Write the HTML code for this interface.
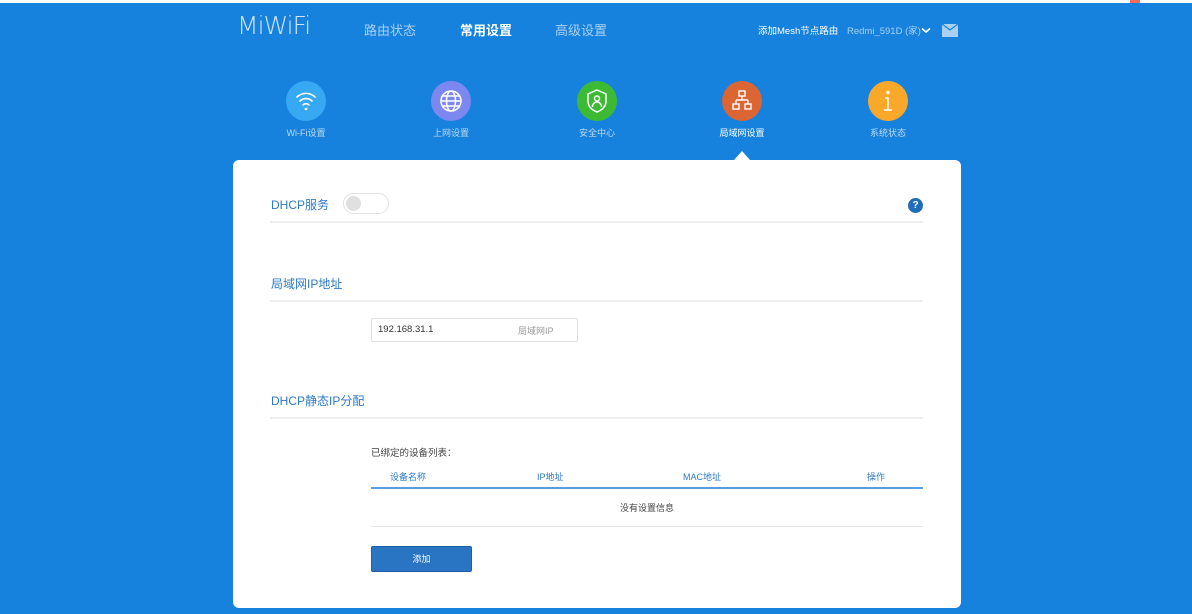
<!DOCTYPE html>
<html><head><meta charset="utf-8"><style>
*{margin:0;padding:0;box-sizing:border-box}
body{width:1192px;height:614px;background:#1782dd;font-family:"Liberation Sans","Noto Sans CJK SC",sans-serif;position:relative;overflow:hidden}
.a{position:absolute}
.top{left:0;top:0;width:1192px;height:3px;background:#fff}
.logo{left:237px;top:11px;color:#cfe4f8;font-size:25px;font-family:"DejaVu Sans","Liberation Sans",sans-serif;font-weight:200;letter-spacing:-1px}
.nav{top:20px;font-size:13px;color:#a9d0f2}
.ic{width:40px;height:40px;border-radius:50%;top:81px}
.lbl{top:126px;font-size:9px;color:#bcd9f3;width:100px;text-align:center}
.card{left:233px;top:160px;width:728px;height:448px;background:#fff;border-radius:6px}
.h{font-size:12px;color:#2d79c7}
.line{height:2px;background:#eeeeee;left:270px;width:653px}
</style></head><body>
<div class="a top"></div>
<div class="a" style="left:1130px;top:0;width:10px;height:3px;background:#f06b5e"></div>
<div class="a logo">MiWiFi</div>
<div class="a nav" style="left:364px">路由状态</div>
<div class="a nav" style="left:460px;color:#fff;font-weight:bold">常用设置</div>
<div class="a nav" style="left:555px">高级设置</div>
<div class="a" style="left:758px;top:23px;font-size:9.5px;color:#fff">添加Mesh节点路由</div>
<div class="a" style="left:847px;top:23px;font-size:9.5px;color:#a9d0f2">Redmi_591D (家)</div>
<svg class="a" style="left:921px;top:27px" width="10" height="7" viewBox="0 0 10 7"><path d="M1 1.5L5 5L9 1.5" stroke="#fff" stroke-width="1.6" fill="none"/></svg>
<svg class="a" style="left:942px;top:24px" width="16" height="13" viewBox="0 0 16 13"><rect width="16" height="13" fill="#a9d0f2"/><path d="M0 0L8 6L16 0" stroke="#1782dd" stroke-width="1.2" fill="none"/></svg>

<div class="a ic" style="left:286px;background:#36a9f2"></div>
<svg class="a" style="left:286px;top:81px" width="40" height="40" viewBox="0 0 40 40" fill="none" stroke="#fff" stroke-width="1.6" stroke-linecap="round"><path d="M11 16a13 13 0 0 1 18 0"/><path d="M14 20a8.5 8.5 0 0 1 12 0"/><path d="M17 24a4 4 0 0 1 6 0"/><circle cx="20" cy="28" r="0.6" fill="#fff"/></svg>
<div class="a ic" style="left:431px;background:#7c88f0"></div>
<svg class="a" style="left:431px;top:81px" width="40" height="40" viewBox="0 0 40 40" fill="none" stroke="#fff" stroke-width="1.5"><circle cx="20" cy="20" r="10"/><ellipse cx="20" cy="20" rx="4.5" ry="10"/><path d="M10 20h20M12 15h16M12 25h16"/></svg>
<div class="a ic" style="left:577px;background:#3dba34"></div>
<svg class="a" style="left:577px;top:81px" width="40" height="40" viewBox="0 0 40 40" fill="none" stroke="#fff" stroke-width="1.5"><path d="M20 9l9 4v7c0 6-4 9-9 11c-5-2-9-5-9-11v-7z"/><circle cx="20" cy="17.5" r="2.5"/><path d="M15.5 26c0-3 2-5 4.5-5s4.5 2 4.5 5"/></svg>
<div class="a ic" style="left:722px;background:#dc6534"></div>
<svg class="a" style="left:722px;top:81px" width="40" height="40" viewBox="0 0 40 40" fill="none" stroke="#fff" stroke-width="1.4"><rect x="17" y="10" width="6" height="5"/><path d="M20 15v4M14 19h12M14 19v4M26 19v4"/><rect x="11" y="23" width="6" height="5"/><rect x="23" y="23" width="6" height="5"/></svg>
<div class="a ic" style="left:868px;background:#f9a82a"></div>
<svg class="a" style="left:868px;top:81px" width="40" height="40" viewBox="0 0 40 40" fill="none" stroke="#fff" stroke-width="1.4"><circle cx="20" cy="11.5" r="1" fill="#fff"/><path d="M17 17h3v12M16 29h8"/></svg>
<div class="a lbl" style="left:256px">Wi-Fi设置</div>
<div class="a lbl" style="left:401px">上网设置</div>
<div class="a lbl" style="left:547px">安全中心</div>
<div class="a lbl" style="left:692px;color:#fff">局域网设置</div>
<div class="a lbl" style="left:838px">系统状态</div>
<div class="a" style="left:734px;top:151px;width:0;height:0;border-left:8px solid transparent;border-right:8px solid transparent;border-bottom:9px solid #fff"></div>

<div class="a card"></div>
<div class="a h" style="left:271px;top:196px">DHCP服务</div>
<div class="a" style="left:343px;top:193px;width:46px;height:21px;border:1px solid #e2e2e2;border-radius:11px;background:#fff"></div>
<div class="a" style="left:346px;top:196px;width:15px;height:15px;border-radius:50%;background:#e0e0e0"></div>
<div class="a" style="left:908px;top:198px;width:15px;height:15px;border-radius:50%;background:#1f6db8;color:#fff;font-size:10px;font-weight:bold;text-align:center;line-height:15px">?</div>
<div class="a line" style="top:221px"></div>
<div class="a h" style="left:271px;top:275px">局域网IP地址</div>
<div class="a line" style="top:300px"></div>
<div class="a" style="left:371px;top:318px;width:207px;height:24px;border:1px solid #e0e0e0;border-radius:2px"></div>
<div class="a" style="left:378px;top:324px;font-size:9.5px;color:#333">192.168.31.1</div>
<div class="a" style="left:518px;top:324px;font-size:9px;color:#999">局域网IP</div>
<div class="a h" style="left:271px;top:392px">DHCP静态IP分配</div>
<div class="a line" style="top:417px"></div>
<div class="a" style="left:371px;top:445px;font-size:9.5px;color:#444">已绑定的设备列表：</div>
<div class="a" style="left:390px;top:470px;font-size:9px;color:#2d79c7">设备名称</div>
<div class="a" style="left:537px;top:470px;font-size:9px;color:#2d79c7">IP地址</div>
<div class="a" style="left:683px;top:470px;font-size:9px;color:#2d79c7">MAC地址</div>
<div class="a" style="left:867px;top:470px;font-size:9px;color:#2d79c7">操作</div>
<div class="a" style="left:371px;top:487px;width:552px;height:2px;background:#5b9be0"></div>
<div class="a" style="left:371px;top:501px;width:552px;text-align:center;font-size:9px;color:#444">没有设置信息</div>
<div class="a" style="left:371px;top:526px;width:552px;height:1px;background:#e8e8e8"></div>
<div class="a" style="left:371px;top:546px;width:101px;height:26px;background:#2a74c4;border:1px solid #1f5fa8;border-radius:2px;color:#fff;font-size:9px;text-align:center;line-height:24px">添加</div>
</body></html>
